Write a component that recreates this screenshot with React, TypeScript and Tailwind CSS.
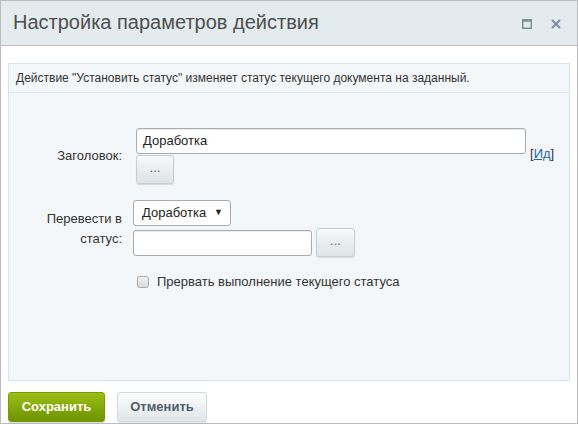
import React from "react";

const font = { fontFamily: '"Liberation Sans", Arial, sans-serif' };

function DotsButton({ className = "" }: { className?: string }) {
  return (
    <button
      className={
        "flex items-center justify-center rounded-[3px] border border-[#c6cdd3] bg-gradient-to-b from-[#f7f9fa] to-[#dde3e7] text-[13px] leading-none text-[#5d666f] shadow-[0_1px_1px_rgba(0,0,0,0.12)] " +
        className
      }
    >
      <span className="-mt-[4px]">...</span>
    </button>
  );
}

export default function App() {
  return (
    <div
      style={font}
      className="flex h-[424px] w-[578px] flex-col border border-[#bcbcbc] bg-white"
    >
      {/* title bar */}
      <div className="flex h-[45px] shrink-0 items-center justify-between border-b border-[#bcbcbc] bg-[#e4ebee] pl-[12px] pr-[16px]">
        <span className="-mt-[3px] text-[20px] leading-none text-[#4f4f4f]">
          Настройка параметров действия
        </span>
        <div className="flex items-center gap-[19px] pt-[1px]">
          <svg width="10" height="10" viewBox="0 0 10 10">
            <rect x="0.75" y="0.75" width="8.5" height="8.5" fill="none" stroke="#7f8c9c" strokeWidth="1.5" />
            <rect x="0.75" y="0.75" width="8.5" height="2" fill="#7f8c9c" />
          </svg>
          <svg width="10" height="10" viewBox="0 0 10 10">
            <path d="M1 1 L9 9 M9 1 L1 9" stroke="#7f8c9c" strokeWidth="2" />
          </svg>
        </div>
      </div>

      <div className="flex flex-1 flex-col px-[7px] pt-[17px]">
        {/* settings panel */}
        <div className="flex h-[318px] flex-col border border-[#d9e4ea] bg-[#f4f7f9]">
          <div className="flex h-[29px] items-center border-b border-[#dfe8ed] pl-[7px] text-[12px] text-[#333]">
            Действие "Установить статус" изменяет статус текущего документа на заданный.
          </div>

          <div className="flex flex-col pt-[35px] text-[13px] text-[#333]">
            {/* title row */}
            <div className="flex items-center">
              <div className="w-[113px] text-right">Заголовок:</div>
              <div className="ml-[14px] flex flex-col gap-[1px]">
                <div className="flex items-end">
                  <div className="flex h-[26px] w-[390px] items-center rounded-[3px] border border-[#a6acb3] bg-white pl-[6px] text-[13px] text-[#222] shadow-[inset_0_1px_1px_rgba(0,0,0,0.08)]">
                    Доработка
                  </div>
                  <span className="-mb-[9px] ml-[4px] text-[13px] text-[#333]">
                    [<span className="text-[#2067b0] underline">Ид</span>]
                  </span>
                </div>
                <DotsButton className="h-[29px] w-[38px]" />
              </div>
            </div>

            {/* status row */}
            <div className="mt-[16px] flex items-center">
              <div className="w-[113px] text-right leading-[20px]">
                Перевести в
                <br />
                статус:
              </div>
              <div className="ml-[11px] flex flex-col gap-[2px]">
                <div className="flex h-[26px] w-[98px] items-center justify-between rounded-[3px] border border-[#a6acb3] bg-white pl-[8px] pr-[7px] text-[13px] text-[#222]">
                  <span>Доработка</span>
                  <span className="text-[9px] text-[#222]">▼</span>
                </div>
                <div className="flex items-center gap-[4px]">
                  <div className="h-[26px] w-[179px] rounded-[3px] border border-[#a6acb3] bg-white shadow-[inset_0_1px_1px_rgba(0,0,0,0.08)]" />
                  <DotsButton className="h-[29px] w-[39px]" />
                </div>
              </div>
            </div>

            {/* interrupt checkbox */}
            <div className="mt-[15px] flex items-center pl-[128px]">
              <div className="h-[12px] w-[12px] rounded-[3px] border border-[#a9adb2] bg-gradient-to-b from-[#f3f3f3] to-[#d9d9d9]" />
              <span className="ml-[8px] text-[13px] text-[#333]">
                Прервать выполнение текущего статуса
              </span>
            </div>
          </div>
        </div>

        {/* footer buttons */}
        <div className="mt-[11px] flex gap-[12px]">
          <button className="flex h-[30px] w-[97px] items-center justify-center rounded-[3px] border border-[#7a9a08] bg-gradient-to-b from-[#9cbf14] to-[#6e9300] text-[13px] font-bold text-white shadow-[0_1px_1px_rgba(0,0,0,0.15)]">
            Сохранить
          </button>
          <button className="flex h-[30px] w-[90px] items-center justify-center rounded-[3px] border border-[#d2d8dc] bg-gradient-to-b from-[#fdfdfd] to-[#e0e6e9] text-[13px] font-bold text-[#535c69] shadow-[0_1px_1px_rgba(0,0,0,0.1)]">
            Отменить
          </button>
        </div>
      </div>
    </div>
  );
}
